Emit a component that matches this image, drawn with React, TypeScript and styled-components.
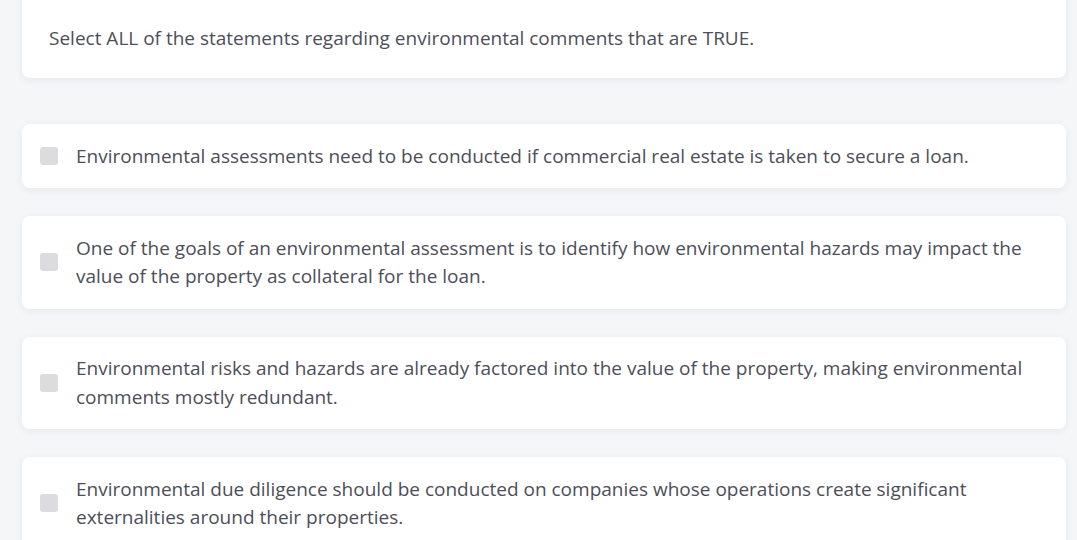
import React from "react";
import styled, { createGlobalStyle } from "styled-components";

const GlobalStyle = createGlobalStyle`
  html, body {
    margin: 0;
    padding: 0;
    background: #f5f6f8;
    overflow: hidden;
  }
  body {
    font-family: "Open Sans", "Noto Sans", sans-serif;
    color: #4d4e59;
  }
`;

const Page = styled.div`
  width: 1077px;
  height: 540px;
  overflow: hidden;
  box-sizing: border-box;
  padding: 0 11px 0 22px;
`;

const Column = styled.div`
  display: flex;
  flex-direction: column;
  margin-top: -13px;
`;

const QuestionCard = styled.div`
  background: #ffffff;
  border-radius: 8px;
  box-shadow: 0 2px 8px rgba(30, 40, 60, 0.07);
  padding: 37px 27px 25px;
  font-size: 19px;
  line-height: 29px;
  margin-bottom: 46px;
`;

const Options = styled.div`
  display: flex;
  flex-direction: column;
  gap: 28px;
`;

const OptionCard = styled.label`
  display: flex;
  align-items: center;
  gap: 18px;
  background: #ffffff;
  border-radius: 8px;
  box-shadow: 0 2px 8px rgba(30, 40, 60, 0.07);
  padding: 17.75px 30px 17.75px 18px;
  font-size: 19px;
  line-height: 28.5px;
  cursor: pointer;
`;

const Box = styled.span`
  flex: none;
  width: 18px;
  height: 18px;
  border-radius: 3px;
  background: #dcdcdf;
`;

const OptionText = styled.span`
  flex: 1;
`;

const options = [
  "Environmental assessments need to be conducted if commercial real estate is taken to secure a loan.",
  "One of the goals of an environmental assessment is to identify how environmental hazards may impact the value of the property as collateral for the loan.",
  "Environmental risks and hazards are already factored into the value of the property, making environmental comments mostly redundant.",
  "Environmental due diligence should be conducted on companies whose operations create significant externalities around their properties.",
];

export default function App() {
  return (
    <>
      <GlobalStyle />
      <Page>
        <Column>
          <QuestionCard>
            Select ALL of the statements regarding environmental comments that are TRUE.
          </QuestionCard>
          <Options>
            {options.map((text) => (
              <OptionCard key={text}>
                <Box />
                <OptionText>{text}</OptionText>
              </OptionCard>
            ))}
          </Options>
        </Column>
      </Page>
    </>
  );
}
